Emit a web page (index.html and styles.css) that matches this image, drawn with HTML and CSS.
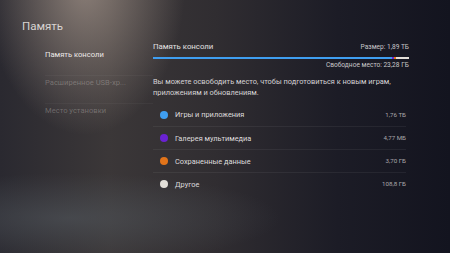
FILE: index.html
```html
<!DOCTYPE html>
<html>
  <head>
    <meta charset="utf-8">
    <meta name="viewport" content="width=device-width,initial-scale=1">
    <title>Память</title>
    <link rel="stylesheet" href="styles.css">
  </head>
  <body>
    <div class="screen">
      <aside class="side">
        <h1 class="title">Память</h1>
        <ul class="menu">
          <li class="menu-item is-active">Память консоли</li>
          <li class="menu-item">Расширенное USB-хр...</li>
          <li class="menu-item">Место установки</li>
        </ul>
      </aside>

      <main class="panel">
        <div class="panel-head">
          <span class="panel-name">Память консоли</span>
          <span class="panel-size">Размер: 1,89 ТБ</span>
        </div>
        <div class="bar">
          <span class="bar-part games" style="width: 93.4%"></span>
          <span class="bar-part media" style="width: 0.8%"></span>
          <span class="bar-part saves" style="width: 0.8%"></span>
          <span class="bar-part other" style="width: 5%"></span>
        </div>
        <div class="panel-free">Свободное место: 23,28 ГБ</div>

        <p class="hint">Вы можете освободить место, чтобы подготовиться к новым играм, приложениям и обновлениям.</p>

        <ul class="usage">
          <li class="usage-row">
            <span class="dot games"></span>
            <span class="usage-name">Игры и приложения</span>
            <span class="usage-value">1,76 ТБ</span>
          </li>
          <li class="usage-row">
            <span class="dot media"></span>
            <span class="usage-name">Галерея мультимедиа</span>
            <span class="usage-value">4,77 МБ</span>
          </li>
          <li class="usage-row">
            <span class="dot saves"></span>
            <span class="usage-name">Сохраненные данные</span>
            <span class="usage-value">3,70 ГБ</span>
          </li>
          <li class="usage-row">
            <span class="dot other"></span>
            <span class="usage-name">Другое</span>
            <span class="usage-value">108,8 ГБ</span>
          </li>
        </ul>
      </main>
    </div>
  </body>
</html>
```

FILE: styles.css
```css
* {
  box-sizing: border-box;
  margin: 0;
  padding: 0;
}

body, html {
  height: 100%;
  width: 100%;
  overflow: hidden;
}

body {
  font-family: Roboto, "Noto Sans", sans-serif;
  color: #e6e4e2;
  background:
    radial-gradient(ellipse 100px 150px at 85px -15px, rgba(165, 150, 140, 0.75), transparent),
    radial-gradient(ellipse 210px 45px at 70px 218px, rgba(84, 90, 96, 0.55), transparent),
    linear-gradient(90deg, #2a2930 0, #3b3738 24%, #302d31 48%, #1c1c26 75%, #13141f 100%);
}

.screen {
  display: grid;
  grid-template-columns: 153px 256px;
  height: 253px;
}

/* left column */

.side {
  padding: 18px 0 0 22px;
}

.title {
  font-size: 11.5px;
  font-weight: 400;
  color: #d8d4d2;
  line-height: 16px;
}

.menu {
  list-style: none;
  margin: 14px 0 0 23px;
}

.menu-item {
  font-size: 7.6px;
  line-height: 13px;
  color: rgba(220, 214, 210, 0.32);
  padding-bottom: 14px;
  white-space: nowrap;
}

.menu-item + .menu-item {
  border-top: 1px solid rgba(255, 255, 255, 0.035);
}

.menu-item.is-active {
  color: #ebe8e6;
}

/* right panel */

.panel {
  padding-top: 42px;
  font-size: 7.4px;
}

.panel-head {
  display: flex;
  justify-content: space-between;
  align-items: baseline;
  line-height: 10px;
}

.panel-name {
  color: #e2e0e0;
  font-size: 7.8px;
}

.panel-size {
  color: #c9c7c9;
  font-size: 6.6px;
}

.bar {
  display: flex;
  height: 2px;
  margin-top: 5px;
}

.bar-part.games { background: #3f9ef0; }
.bar-part.media { background: #6a22d2; }
.bar-part.saves { background: #e2741a; }
.bar-part.other { background: #e2ded8; }

.panel-free {
  text-align: right;
  font-size: 6.6px;
  line-height: 9px;
  margin-top: 2px;
  color: #c9c7c9;
}

.hint {
  margin-top: 7px;
  line-height: 10.5px;
  color: #d4d2d4;
  font-size: 7.4px;
}

.usage {
  list-style: none;
  margin-top: 5px;
  padding-right: 3px;
}

.usage-row {
  display: flex;
  align-items: center;
  height: 23px;
  padding-left: 7px;
}

.usage-row + .usage-row {
  border-top: 1px solid rgba(255, 255, 255, 0.06);
}

.dot {
  width: 8px;
  height: 8px;
  border-radius: 50%;
  margin-right: 7px;
}

.dot.games { background: #3f9ef0; }
.dot.media { background: #6a22d2; }
.dot.saves { background: #e2741a; }
.dot.other { background: #e2ded8; }

.usage-name {
  flex: 1;
  color: #dddbdc;
}

.usage-value {
  font-size: 6.2px;
  color: #a9a7ab;
}
```
